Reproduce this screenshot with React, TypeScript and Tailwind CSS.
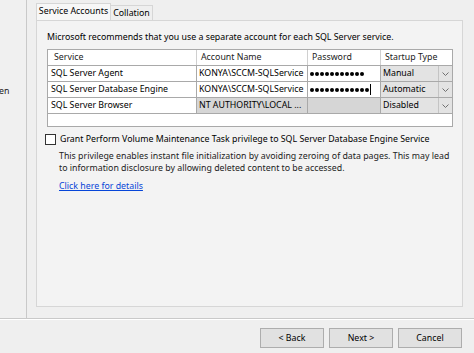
import React from "react";

const font = { fontFamily: '"Noto Sans", "Open Sans", sans-serif' };

function Dots({ n }: { n: number }) {
  return (
    <div className="flex gap-[1px]">
      {Array.from({ length: n }).map((_, i) => (
        <span key={i} className="w-[4px] h-[4px] rounded-full bg-black" />
      ))}
    </div>
  );
}

function Startup({ label }: { label: string }) {
  return (
    <div className="flex h-full bg-[#e3e3e3]">
      <div className="flex-1 pl-[2px] flex items-center">{label}</div>
      <div className="w-[14px] border-l border-[#c4c4c4] flex items-center justify-center">
        <svg width="7" height="4" viewBox="0 0 7 4">
          <path d="M0.5 0.5 L3.5 3.5 L6.5 0.5" fill="none" stroke="#707070" strokeWidth="1" />
        </svg>
      </div>
    </div>
  );
}

const rows = [
  { service: "SQL Server Agent", account: "KONYA\\SCCM-SQLService", dots: 11, startup: "Manual", disabled: false, caret: false },
  { service: "SQL Server Database Engine", account: "KONYA\\SCCM-SQLService", dots: 12, startup: "Automatic", disabled: false, caret: true },
  { service: "SQL Server Browser", account: "NT AUTHORITY\\LOCAL ...", dots: 0, startup: "Disabled", disabled: true, caret: false },
];

export default function App() {
  return (
    <div
      className="w-[474px] h-[353px] bg-[#efefef] text-[8.8px] leading-none text-black overflow-hidden flex flex-col whitespace-nowrap"
      style={font}
    >
      <div className="h-[319px] flex border-b border-[#c9c9c9]">
        {/* left nav */}
        <div className="w-[28px] border-r border-[#c9c9c9] bg-[#f0f0f0] pt-[87px] text-[#222]">
          <span className="-ml-[1px]">en</span>
        </div>

        {/* main */}
        <div className="flex-1 pl-[9px] pr-[11px] pt-[3px] pb-[11px] flex flex-col">
          <div className="flex h-[17px] items-end">
            <div className="h-[17px] w-[75px] border border-b-0 border-[#d6d6d6] bg-[#f7f7f7] flex items-center justify-center pb-[2px]">
              Service Accounts
            </div>
            <div className="h-[15px] w-[42px] border border-l-0 border-b-0 border-[#d6d6d6] bg-[#efefef] flex items-center justify-center">
              Collation
            </div>
          </div>

          <div className="flex-1 border border-[#d6d6d6] bg-[#f3f3f3] pl-[10px] pr-[9px] pt-[11px]">
            <div className="h-[10px] flex items-center">
              Microsoft recommends that you use a separate account for each SQL Server service.
            </div>

            <div className="mt-[7px] w-[406px] h-[78px] bg-white border border-[#a9a9a9]">
              <div className="grid grid-cols-[149px_111px_73px_1fr] h-[16px] border-b border-[#a9a9a9] text-[#222]">
                <div className="pl-[6px] flex items-center border-r border-[#d0d0d0]">Service</div>
                <div className="pl-[4px] flex items-center border-r border-[#d0d0d0]">Account Name</div>
                <div className="pl-[4px] flex items-center border-r border-[#d0d0d0]">Password</div>
                <div className="pl-[4px] flex items-center">Startup Type</div>
              </div>
              {rows.map((r) => (
                <div
                  key={r.service}
                  className="grid grid-cols-[149px_111px_73px_1fr] h-[16px] border-b border-[#a9a9a9]"
                >
                  <div className="pl-[3px] flex items-center border-r border-[#a9a9a9]">{r.service}</div>
                  <div
                    className={
                      "pl-[2px] flex items-center border-r border-[#a9a9a9] " +
                      (r.disabled ? "bg-[#d6d6d6]" : "bg-white")
                    }
                  >
                    {r.account}
                  </div>
                  <div
                    className={
                      "pl-[2px] flex items-center gap-[1px] border-r border-[#a9a9a9] " +
                      (r.disabled ? "bg-[#d6d6d6]" : "bg-white")
                    }
                  >
                    {r.dots > 0 && <Dots n={r.dots} />}
                    {r.caret && <span className="w-[1px] h-[11px] bg-black" />}
                  </div>
                  <Startup label={r.startup} />
                </div>
              ))}
            </div>

            <div className="mt-[7px] flex items-center -ml-[2px]">
              <span className="w-[11px] h-[11px] border border-[#333] bg-white" />
              <span className="ml-[4px]">
                Grant Perform Volume Maintenance Task privilege to SQL Server Database Engine Service
              </span>
            </div>

            <div className="mt-[5px] pl-[12px] text-[#222] leading-[12px]">
              <p>
                This privilege enables instant file initialization by avoiding zeroing of data pages. This may lead
              </p>
              <p>to information disclosure by allowing deleted content to be accessed.</p>
              <p className="mt-[6px] text-[#0645d8] underline">Click here for details</p>
            </div>
          </div>
        </div>
      </div>

      {/* buttons */}
      <div className="flex-1 border-t border-white flex justify-end items-start pt-[8px] pr-[12px] gap-[4px]">
        <button className="w-[64px] h-[20px] bg-[#e1e1e1] border border-[#adadad]">&lt; Back</button>
        <button className="w-[64px] h-[20px] bg-[#e1e1e1] border border-[#adadad] ml-[1px]">Next &gt;</button>
        <button className="w-[64px] h-[20px] bg-[#e1e1e1] border border-[#adadad] ml-[1px]">Cancel</button>
      </div>
    </div>
  );
}
